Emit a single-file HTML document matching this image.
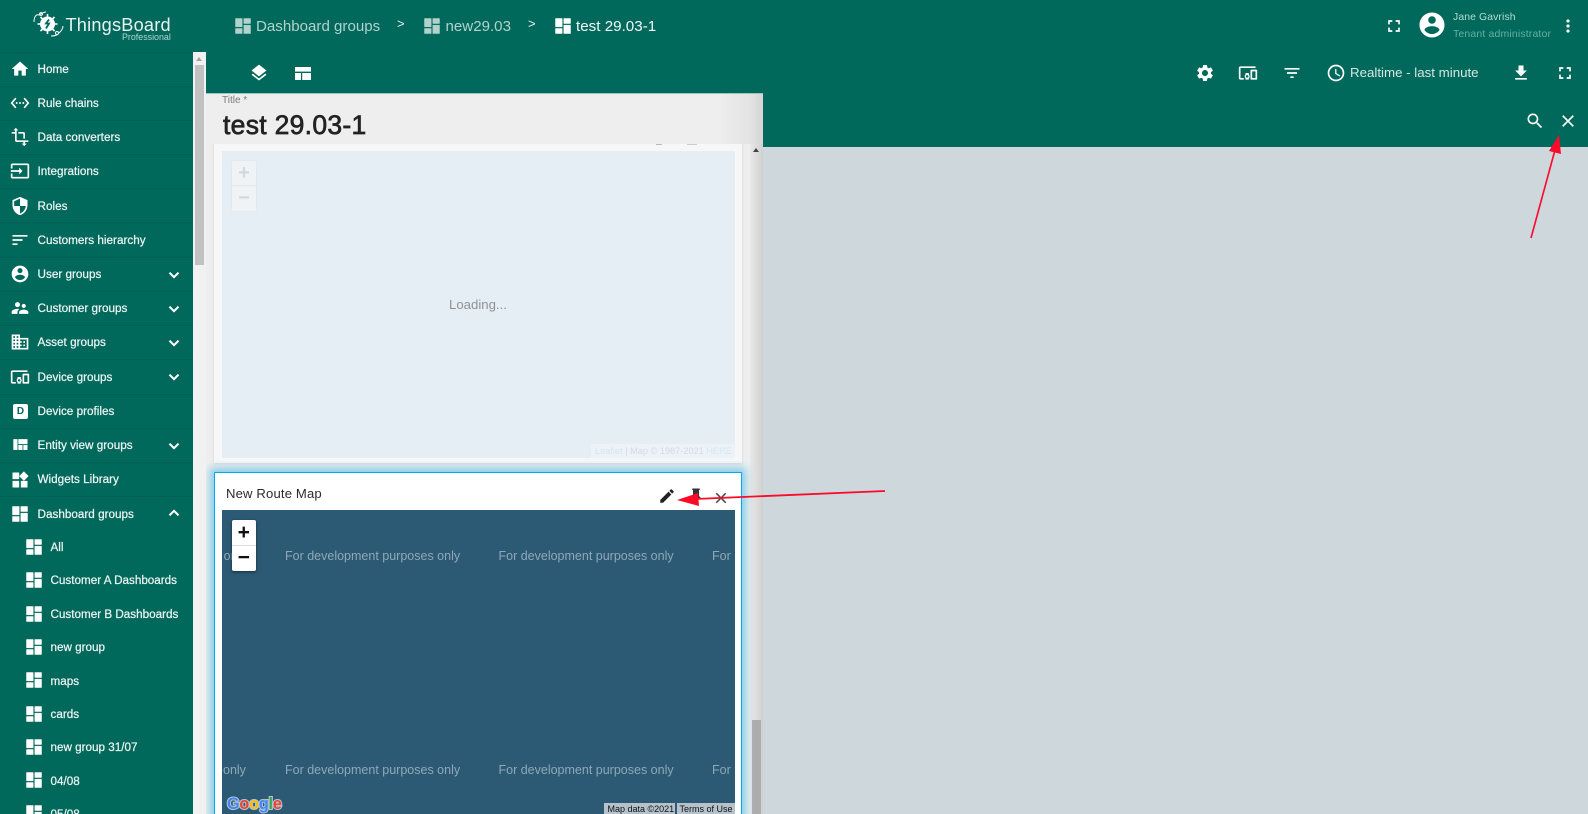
<!DOCTYPE html>
<html><head><meta charset="utf-8"><title>ThingsBoard</title>
<style>
html,body{margin:0;padding:0;width:1588px;height:814px;overflow:hidden;background:#cdd7dc;font-family:"Liberation Sans",sans-serif}
#r{position:absolute;left:0;top:0;width:1588px;height:814px;overflow:hidden}
.a{position:absolute}
.t{position:absolute;white-space:nowrap}
svg.i{position:absolute;width:20px;height:20px;fill:#fff}
svg.b{stroke:#fff;stroke-width:.6}
svg.g{stroke:#b2d2cd;stroke-width:.6}
.m{position:absolute;left:37.5px;height:34px;line-height:36px;font-size:11.72px;color:rgba(255,255,255,.92);white-space:nowrap;-webkit-text-stroke:.25px rgba(255,255,255,.8)}
.s{position:absolute;left:50.5px;height:34px;line-height:36px;font-size:11.68px;color:rgba(255,255,255,.92);white-space:nowrap;-webkit-text-stroke:.25px rgba(255,255,255,.8)}
.l{position:absolute;left:0;width:193px;height:1px;background:#005f53}
.f{position:absolute;white-space:nowrap;font-size:12.5px;line-height:14px;color:#8fa8b6}
</style></head><body><div id="r">
<svg width="0" height="0" style="position:absolute"><defs>
<symbol id="d" viewBox="0 0 24 24"><path d="M3 13h8V3H3v10zm0 8h8v-6H3v6zm10 0h8V11h-8v10zm0-18v6h8V3h-8z"/></symbol>
<symbol id="dn" viewBox="0 0 24 24"><path d="M16.59 8.59L12 13.17 7.41 8.59 6 10l6 6 6-6z"/></symbol>
<symbol id="fs" viewBox="0 0 24 24"><path d="M7 14H5v5h5v-2H7v-3zm-2-4h2V7h3V5H5v5zm12 7h-3v2h5v-5h-2v3zM14 5v2h3v3h2V5h-5z"/></symbol>
<symbol id="dv" viewBox="0 0 24 24"><path d="M3 6h18V4H3c-1.1 0-2 .9-2 2v12c0 1.1.9 2 2 2h4v-2H3V6zm10 6H9v1.78c-.61.55-1 1.33-1 2.22s.39 1.67 1 2.22V20h4v-1.78c.61-.55 1-1.34 1-2.22s-.39-1.67-1-2.22V12zm-2 5.5c-.83 0-1.5-.67-1.5-1.5s.67-1.5 1.5-1.5 1.5.67 1.5 1.5-.67 1.5-1.5 1.5zM22 8h-6c-.5 0-1 .5-1 1v10c0 .5.5 1 1 1h6c.5 0 1-.5 1-1V9c0-.5-.5-1-1-1zm-1 10h-4v-8h4v8z"/></symbol>
</defs></svg>

<!-- header -->
<div class="a" style="left:193px;top:0;width:1395px;height:93px;background:#00695c"></div>
<div class="a" style="left:762px;top:93px;width:826px;height:54px;background:#00695c"></div>
<div class="a" style="left:0;top:0;width:193px;height:814px;background:#00695c"></div>
<div class="a" style="left:763px;top:147px;width:825px;height:667px;background:#cdd7dc"></div>

<!-- logo -->
<svg class="a" style="left:30px;top:6px" width="36" height="36" viewBox="0 0 36 36" fill="none" stroke="#fff">
<circle cx="17.5" cy="18" r="7.5" fill="#fff" stroke="none"/>
<g stroke-width="1.6"><path d="M17.5 8v20M7.5 18h20M10.5 11l14 14M24.5 11l-14 14"/></g>
<path d="M19 13.5l-3 4h3l-3 5" stroke="#00695c" stroke-width="1.8"/>
<path d="M4 16c0-5 2-8 5-7 2-1 4-3 7-3" stroke-width="1"/><circle cx="11" cy="8" r="1.4" stroke-width="1"/>
<path d="M33 20c0 3-2 5-4 7-1 2-4 3-8 3" stroke-width="1"/><circle cx="27" cy="27" r="1.5" stroke-width="1"/>
</svg>
<div class="t" style="left:65.5px;top:13px;font-size:18.2px;line-height:24px;color:#e8f3f1;letter-spacing:.2px">ThingsBoard</div>
<div class="t" style="left:122px;top:32px;font-size:8.9px;line-height:10px;color:#b2d6d0">Professional</div>

<!-- sidebar scrollbar -->
<div class="a" style="left:193px;top:52px;width:13px;height:762px;background:#f1f1f1"></div>
<div class="a" style="left:195px;top:65px;width:9px;height:200px;background:#c1c1c1"></div>
<div class="a" style="left:196px;top:57px;width:0;height:0;border-left:3.5px solid transparent;border-right:3.5px solid transparent;border-bottom:4px solid #a3a3a3"></div>

<!-- sidebar separators -->
<div class="l" style="top:52px"></div><div class="l" style="top:86px"></div><div class="l" style="top:120px"></div><div class="l" style="top:154px"></div><div class="l" style="top:188px"></div><div class="l" style="top:222px"></div><div class="l" style="top:257px"></div><div class="l" style="top:291px"></div><div class="l" style="top:325px"></div><div class="l" style="top:359px"></div><div class="l" style="top:394px"></div><div class="l" style="top:428px"></div><div class="l" style="top:462px"></div><div class="l" style="top:496px"></div>

<!-- sidebar menu -->
<svg class="i" style="left:10px;top:59px" viewBox="0 0 24 24"><path d="M10 20v-6h4v6h5v-8h3L12 3 2 12h3v8z"/></svg><div class="m" style="top:52px">Home</div>
<svg class="i" style="left:10px;top:93px" viewBox="0 0 24 24"><path d="M7.77 6.76L6.23 5.48.82 12l5.41 6.52 1.54-1.28L3.42 12l4.35-5.24zM7 13h2v-2H7v2zm10-2h-2v2h2v-2zm-6 2h2v-2h-2v2zm6.77-7.52l-1.54 1.28L20.58 12l-4.35 5.24 1.54 1.28L23.18 12l-5.41-6.52z"/></svg><div class="m" style="top:86px">Rule chains</div>
<svg class="i" style="left:10px;top:127px" viewBox="0 0 24 24"><path d="M22 18v-2H8V4h2L7 1 4 4h2v2H2v2h4v8c0 1.1.9 2 2 2h8v2h-2l3 3 3-3h-2v-2h4zM10 8h6v6h2V8c0-1.1-.9-2-2-2h-6v2z"/></svg><div class="m" style="top:120px">Data converters</div>
<svg class="i" style="left:10px;top:161px" viewBox="0 0 24 24"><path d="M21 3.01H3c-1.1 0-2 .9-2 2V9h2V4.99h18v14.03H3V15H1v4.01c0 1.1.9 1.98 2 1.98h18c1.1 0 2-.88 2-1.98v-14c0-1.11-.9-2-2-2zM11 16l4-4-4-4v3H1v2h10v3z"/></svg><div class="m" style="top:154px">Integrations</div>
<svg class="i" style="left:10px;top:196px" viewBox="0 0 24 24"><path d="M12 1L3 5v6c0 5.55 3.84 10.74 9 12 5.16-1.26 9-6.45 9-12V5l-9-4zm0 10.99h7c-.53 4.12-3.28 7.79-7 8.94V12H5V6.3l7-3.11v8.8z"/></svg><div class="m" style="top:189px">Roles</div>
<svg class="i" style="left:10px;top:230px" viewBox="0 0 24 24"><path d="M3 18h6v-2H3v2zM3 6v2h18V6H3zm0 7h12v-2H3v2z"/></svg><div class="m" style="top:223px">Customers hierarchy</div>
<svg class="i" style="left:10px;top:264px" viewBox="0 0 24 24"><path d="M12 2C6.48 2 2 6.48 2 12s4.48 10 10 10 10-4.48 10-10S17.52 2 12 2zm0 3c1.66 0 3 1.34 3 3s-1.34 3-3 3-3-1.34-3-3 1.34-3 3-3zm0 14.2c-2.5 0-4.71-1.28-6-3.22.03-1.99 4-3.08 6-3.08 1.99 0 5.97 1.09 6 3.08-1.29 1.94-3.5 3.22-6 3.22z"/></svg><div class="m" style="top:257px">User groups</div>
<svg class="i b" style="left:164px;top:265px"><use href="#dn"/></svg>
<svg class="i" style="left:10px;top:298px" viewBox="0 0 24 24"><path d="M16.5 12c1.38 0 2.49-1.12 2.49-2.5S17.88 7 16.5 7C15.12 7 14 8.12 14 9.5s1.12 2.5 2.5 2.5zM9 11c1.66 0 2.99-1.34 2.99-3S10.66 5 9 5C7.34 5 6 6.34 6 8s1.34 3 3 3zm7.5 3c-1.83 0-5.5.92-5.5 2.75V19h11v-2.25c0-1.83-3.67-2.75-5.5-2.75zM9 13c-2.33 0-7 1.17-7 3.5V19h7v-2.25c0-.85.33-2.34 2.37-3.47C10.5 13.1 9.66 13 9 13z"/></svg><div class="m" style="top:291px">Customer groups</div>
<svg class="i b" style="left:164px;top:299px"><use href="#dn"/></svg>
<svg class="i" style="left:10px;top:332px" viewBox="0 0 24 24"><path d="M12 7V3H2v18h20V7H12zM6 19H4v-2h2v2zm0-4H4v-2h2v2zm0-4H4V9h2v2zm0-4H4V5h2v2zm4 12H8v-2h2v2zm0-4H8v-2h2v2zm0-4H8V9h2v2zm0-4H8V5h2v2zm10 12h-8v-2h2v-2h-2v-2h2v-2h-2V9h8v10zm-2-8h-2v2h2v-2zm0 4h-2v2h2v-2z"/></svg><div class="m" style="top:325px">Asset groups</div>
<svg class="i b" style="left:164px;top:333px"><use href="#dn"/></svg>
<svg class="i" style="left:10px;top:367px"><use href="#dv"/></svg><div class="m" style="top:360px">Device groups</div>
<svg class="i b" style="left:164px;top:367px"><use href="#dn"/></svg>
<div class="a" style="left:13px;top:404px;width:15px;height:15px;background:#fff;border-radius:2px;color:#00695c;font-size:10px;font-weight:bold;line-height:15px;text-align:center">D</div><div class="m" style="top:394px">Device profiles</div>
<svg class="i" style="left:10px;top:435px" viewBox="0 0 24 24"><path d="M10 18h5v-6h-5v6zm-6 0h5V5H4v13zm12 0h5v-6h-5v6zM10 5v6h11V5H10z"/></svg><div class="m" style="top:428px">Entity view groups</div>
<svg class="i b" style="left:164px;top:436px"><use href="#dn"/></svg>
<svg class="i" style="left:10px;top:470px" viewBox="0 0 24 24"><path d="M13 13v8h8v-8h-8zM3 21h8v-8H3v8zM3 3v8h8V3H3zm13.66-1.31L11 7.34 16.66 13l5.66-5.66-5.66-5.65z"/></svg><div class="m" style="top:462px">Widgets Library</div>
<svg class="i b" style="left:10px;top:504px"><use href="#d"/></svg><div class="m" style="top:497px">Dashboard groups</div>
<svg class="i b" style="left:164px;top:503px" viewBox="0 0 24 24"><path d="M12 8l-6 6 1.41 1.41L12 10.83l4.59 4.58L18 14z"/></svg>

<svg class="i b" style="left:24px;top:537px"><use href="#d"/></svg><div class="s" style="top:530px">All</div>
<svg class="i b" style="left:24px;top:570px"><use href="#d"/></svg><div class="s" style="top:563px">Customer A Dashboards</div>
<svg class="i b" style="left:24px;top:604px"><use href="#d"/></svg><div class="s" style="top:597px">Customer B Dashboards</div>
<svg class="i b" style="left:24px;top:637px"><use href="#d"/></svg><div class="s" style="top:630px">new group</div>
<svg class="i b" style="left:24px;top:670px"><use href="#d"/></svg><div class="s" style="top:664px">maps</div>
<svg class="i b" style="left:24px;top:704px"><use href="#d"/></svg><div class="s" style="top:697px">cards</div>
<svg class="i b" style="left:24px;top:737px"><use href="#d"/></svg><div class="s" style="top:730px">new group 31/07</div>
<svg class="i b" style="left:24px;top:770px"><use href="#d"/></svg><div class="s" style="top:764px">04/08</div>
<svg class="i b" style="left:24px;top:803px"><use href="#d"/></svg><div class="s" style="top:797px">05/08</div>

<!-- breadcrumb -->
<svg class="i g" style="left:232.5px;top:16px;fill:#b2d2cd"><use href="#d"/></svg>
<div class="t" style="left:256px;top:17px;font-size:15.1px;line-height:20px;color:#b2d2cd">Dashboard groups</div>
<div class="t" style="left:397px;top:16px;font-size:13px;line-height:16px;color:#e6f0ee">&gt;</div>
<svg class="i g" style="left:422px;top:16px;fill:#b2d2cd"><use href="#d"/></svg>
<div class="t" style="left:445.5px;top:17px;font-size:15.1px;line-height:20px;color:#b2d2cd">new29.03</div>
<div class="t" style="left:528px;top:16px;font-size:13px;line-height:16px;color:#e6f0ee">&gt;</div>
<svg class="i b" style="left:553px;top:16px"><use href="#d"/></svg>
<div class="t" style="left:576px;top:17px;font-size:15.2px;line-height:20px;color:#f4f9f8">test 29.03-1</div>

<!-- dashboard toolbar left -->
<svg class="i" style="left:249px;top:63px" viewBox="0 0 24 24"><path d="M11.99 18.54l-7.37-5.73L3 14.07l9 7 9-7-1.63-1.27-7.38 5.74zM12 16l7.36-5.73L21 9l-9-7-9 7 1.63 1.27L12 16z"/></svg>
<svg class="a" style="left:295px;top:67px" width="16" height="13" fill="#fff"><rect width="16" height="4.6"/><rect y="6" width="6" height="7"/><rect x="7.2" y="6" width="8.8" height="7"/></svg>

<!-- top right -->
<svg class="i" style="left:1384px;top:16px"><use href="#fs"/></svg>
<svg class="a" style="left:1417px;top:10px;fill:#fff" width="30" height="30" viewBox="0 0 24 24"><path d="M12 2C6.48 2 2 6.48 2 12s4.48 10 10 10 10-4.48 10-10S17.52 2 12 2zm0 3c1.66 0 3 1.34 3 3s-1.34 3-3 3-3-1.34-3-3 1.34-3 3-3zm0 14.2c-2.5 0-4.71-1.28-6-3.22.03-1.99 4-3.08 6-3.08 1.99 0 5.97 1.09 6 3.08-1.29 1.94-3.5 3.22-6 3.22z"/></svg>
<div class="t" style="left:1453px;top:11px;font-size:10.4px;line-height:14px;color:#b8dad5;letter-spacing:.12px">Jane Gavrish</div>
<div class="t" style="left:1453px;top:27px;font-size:10.5px;line-height:14px;color:#63b0a5;letter-spacing:.15px">Tenant administrator</div>
<svg class="i" style="left:1558px;top:16px" viewBox="0 0 24 24"><path d="M12 8c1.1 0 2-.9 2-2s-.9-2-2-2-2 .9-2 2 .9 2 2 2zm0 2c-1.1 0-2 .9-2 2s.9 2 2 2 2-.9 2-2-.9-2-2-2zm0 6c-1.1 0-2 .9-2 2s.9 2 2 2 2-.9 2-2-.9-2-2-2z"/></svg>

<svg class="i" style="left:1195px;top:63px;width:20px;height:20px" viewBox="0 0 24 24"><path d="M19.14 12.94c.04-.3.06-.61.06-.94 0-.32-.02-.64-.07-.94l2.03-1.58c.18-.14.23-.41.12-.61l-1.92-3.32c-.12-.22-.37-.29-.59-.22l-2.39.96c-.5-.38-1.03-.7-1.62-.94l-.36-2.54c-.04-.24-.24-.41-.48-.41h-3.84c-.24 0-.43.17-.47.41l-.36 2.54c-.59.24-1.13.57-1.62.94l-2.39-.96c-.22-.08-.47 0-.59.22L2.74 8.87c-.12.21-.08.47.12.61l2.03 1.58c-.05.3-.09.63-.09.94s.02.64.07.94l-2.03 1.58c-.18.14-.23.41-.12.61l1.92 3.32c.12.22.37.29.59.22l2.39-.96c.5.38 1.03.7 1.62.94l.36 2.54c.05.24.24.41.48.41h3.84c.24 0 .44-.17.47-.41l.36-2.54c.59-.24 1.13-.56 1.62-.94l2.39.96c.22.08.47 0 .59-.22l1.92-3.32c.12-.22.07-.47-.12-.61l-2.01-1.58zM12 15.6c-1.98 0-3.6-1.62-3.6-3.6s1.62-3.6 3.6-3.6 3.6 1.62 3.6 3.6-1.62 3.6-3.6 3.6z"/></svg>
<svg class="i" style="left:1238px;top:63px"><use href="#dv"/></svg>
<svg class="i" style="left:1282px;top:63px" viewBox="0 0 24 24"><path d="M10 18h4v-2h-4v2zM3 6v2h18V6H3zm3 7h12v-2H6v2z"/></svg>
<svg class="i" style="left:1326px;top:63px" viewBox="0 0 24 24"><path d="M11.99 2C6.47 2 2 6.48 2 12s4.47 10 9.99 10C17.52 22 22 17.52 22 12S17.52 2 11.99 2zM12 20c-4.42 0-8-3.58-8-8s3.58-8 8-8 8 3.58 8 8-3.58 8-8 8zm.5-13H11v6l5.25 3.15.75-1.23-4.5-2.67z"/></svg>
<div class="t" style="left:1350px;top:64px;font-size:13.3px;line-height:18px;color:#d5e8e5">Realtime - last minute</div>
<svg class="i" style="left:1511px;top:63px" viewBox="0 0 24 24"><path d="M19 9h-4V3H9v6H5l7 7 7-7zM5 18v2h14v-2H5z"/></svg>
<svg class="i" style="left:1555px;top:63px"><use href="#fs"/></svg>
<svg class="i" style="left:1525px;top:111px" viewBox="0 0 24 24"><path d="M15.5 14h-.79l-.28-.27C15.41 12.59 16 11.11 16 9.5 16 5.91 13.09 3 9.5 3S3 5.91 3 9.5 5.91 16 9.5 16c1.61 0 3.09-.59 4.23-1.57l.27.28v.79l5 4.99L20.49 19l-4.99-5zm-6 0C7.01 14 5 11.99 5 9.5S7.01 5 9.5 5 14 7.01 14 9.5 11.99 14 9.5 14z"/></svg>
<svg class="i" style="left:1558px;top:111px" viewBox="0 0 24 24"><path d="M19 6.41L17.59 5 12 10.59 6.41 5 5 6.41 10.59 12 5 17.59 6.41 19 12 13.41 17.59 19 19 17.59 13.41 12z"/></svg>

<!-- panel -->
<div class="a" style="left:206px;top:93px;width:557px;height:721px;background:#eeeeee;overflow:hidden;border-top:1px solid #9fc4be;box-sizing:border-box">
  <div class="a" style="left:544px;top:0;width:13px;height:721px;background:linear-gradient(90deg,#e8e8e8,#d8d8d8 70%,#cfcfcf)"></div>
  <div class="a" style="left:546px;top:626px;width:9px;height:100px;background:#adadad"></div>
  <div class="a" style="left:546.5px;top:54px;width:0;height:0;border-left:3.5px solid transparent;border-right:3.5px solid transparent;border-bottom:4px solid #444"></div>

  <!-- faded card -->
  <div class="a" style="left:7.5px;top:30px;width:528.5px;height:339px;background:#f7f7f7;box-shadow:0 1px 3px rgba(0,0,0,.1)"></div>
  <div class="a" style="left:15.5px;top:57px;width:513.5px;height:307px;background:#e6eef5"></div>
  <div class="a" style="left:26px;top:67px;width:24px;height:50px;background:#f0f3f6;border-radius:2px;box-shadow:0 0 2px rgba(0,0,0,.06)">
    <div class="t" style="left:0;top:0;width:24px;height:25px;text-align:center;line-height:25px;font-size:20px;color:#d4d8db;font-weight:bold">+</div>
    <div class="a" style="left:0;top:24px;width:24px;height:1px;background:#e4e7e9"></div>
    <div class="t" style="left:0;top:25px;width:24px;height:25px;text-align:center;line-height:24px;font-size:20px;color:#d4d8db;font-weight:bold">&#8722;</div>
  </div>
  <div class="t" style="left:243px;top:203px;font-size:13.2px;line-height:16px;color:#8d9296">Loading...</div>
  <div class="a" style="left:385px;top:350px;width:144px;height:14px;background:#ecf2f7"></div>
  <div class="t" style="left:389px;top:351px;font-size:9.2px;line-height:12px;color:#d4dbe0"><span style="color:#d6e6f0">Leaflet</span> | Map &copy; 1987-2021 <span style="color:#d6e6f0">HERE</span></div>

  <!-- header title band -->
  <div class="a" style="left:0;top:0;width:557px;height:49.5px;background:linear-gradient(90deg,#eeeeee 92%,#e2e2e2 98%,#d4d4d4)"></div>
  <div class="t" style="left:16px;top:1px;font-size:10px;line-height:12px;color:#7a7a7a">Title *</div>
  <div class="t" style="left:17px;top:16px;font-size:26.5px;line-height:30px;color:#222;-webkit-text-stroke:.7px #222;letter-spacing:.3px">test 29.03-1</div>
  <div class="a" style="left:450px;top:49.5px;width:6px;height:1px;background:#bbb"></div>
  <div class="a" style="left:481px;top:49.5px;width:10px;height:1px;background:#ccc"></div>

  <!-- active card -->
  <div class="a" style="left:8px;top:378px;width:528px;height:360px;background:#fff;border:1px solid #03a9f4;box-sizing:border-box;box-shadow:0 0 8px 4px #85cce9"></div>
  <div class="t" style="left:20px;top:391px;font-size:13.1px;line-height:18px;color:#2b2b2b;letter-spacing:.15px">New Route Map</div>
  <svg class="i" style="left:452px;top:393px;width:18px;height:18px;fill:#222" viewBox="0 0 24 24"><path d="M3 17.25V21h3.75L17.81 9.94l-3.75-3.75L3 17.25zM20.71 7.04c.39-.39.39-1.02 0-1.41l-2.34-2.34c-.39-.39-1.02-.39-1.41 0l-1.83 1.83 3.75 3.75 1.83-1.83z"/></svg>
  <svg class="i" style="left:481px;top:393px;width:18px;height:18px;fill:#333" viewBox="0 0 24 24"><path d="M16 12V4h1V2H7v2h1v8l-2 2v2h5.2v6h1.6v-6H18v-2l-2-2z"/></svg>
  <svg class="i" style="left:506px;top:395px;width:18px;height:18px;fill:#444" viewBox="0 0 24 24"><path d="M19 6.41L17.59 5 12 10.59 6.41 5 5 6.41 10.59 12 5 17.59 6.41 19 12 13.41 17.59 19 19 17.59 13.41 12z"/></svg>

  <div class="a" style="left:15.5px;top:416px;width:513.5px;height:304px;background:#2c5a75;overflow:hidden">
    <div class="f" style="left:-150px;top:39px">For development purposes only</div>
    <div class="f" style="left:63.5px;top:39px">For development purposes only</div>
    <div class="f" style="left:277px;top:39px">For development purposes only</div>
    <div class="f" style="left:490.5px;top:39px">For</div>
    <div class="f" style="left:1.5px;top:253px">only</div>
    <div class="f" style="left:63.5px;top:253px">For development purposes only</div>
    <div class="f" style="left:277px;top:253px">For development purposes only</div>
    <div class="f" style="left:490.5px;top:253px">For</div>
    <div class="a" style="left:10px;top:10px;width:24.5px;height:51px;background:#fff;border-radius:2px;box-shadow:0 1px 3px rgba(0,0,0,.5)">
      <div class="t" style="left:0;top:0;width:24.5px;height:25px;text-align:center;line-height:25px;font-size:21px;color:#111;font-weight:bold">+</div>
      <div class="a" style="left:0;top:25px;width:24.5px;height:1px;background:#ddd"></div>
      <div class="t" style="left:0;top:26px;width:24.5px;height:25px;text-align:center;line-height:24px;font-size:21px;color:#111;font-weight:bold">&#8722;</div>
    </div>
    <svg class="a" style="left:3px;top:278px" width="70" height="26"><text x="2" y="21" font-family="Liberation Sans,sans-serif" font-size="16.2" font-weight="bold" stroke="#b9c6cf" stroke-width="2" paint-order="stroke" letter-spacing="-.2"><tspan fill="#4285f4">G</tspan><tspan fill="#ea4335">o</tspan><tspan fill="#fbbc05">o</tspan><tspan fill="#4285f4">g</tspan><tspan fill="#34a853">l</tspan><tspan fill="#ea4335">e</tspan></text></svg>
    <div class="a" style="left:382px;top:293px;width:71px;height:11px;background:#b5c2cb"></div>
    <div class="t" style="left:386px;top:292.5px;font-size:9px;line-height:12px;color:#111">Map data &copy;2021</div>
    <div class="a" style="left:455px;top:293px;width:59px;height:11px;background:#b5c2cb"></div>
    <div class="t" style="left:458px;top:292.5px;font-size:9px;line-height:12px;color:#111">Terms of Use</div>
  </div>
</div>

<!-- arrows -->
<svg class="a" style="left:0;top:0;pointer-events:none" width="1588" height="814">
<line x1="1531" y1="238" x2="1555" y2="150" stroke="#fb0a2a" stroke-width="1.6"/>
<polygon points="1559,135 1549,151 1561,154" fill="#fb0a2a"/>
<line x1="885" y1="491" x2="695" y2="499" stroke="#fb0a2a" stroke-width="1.8"/>
<polygon points="677,500 698,493 699,506" fill="#fb0a2a"/>
</svg>
</div></body></html>
